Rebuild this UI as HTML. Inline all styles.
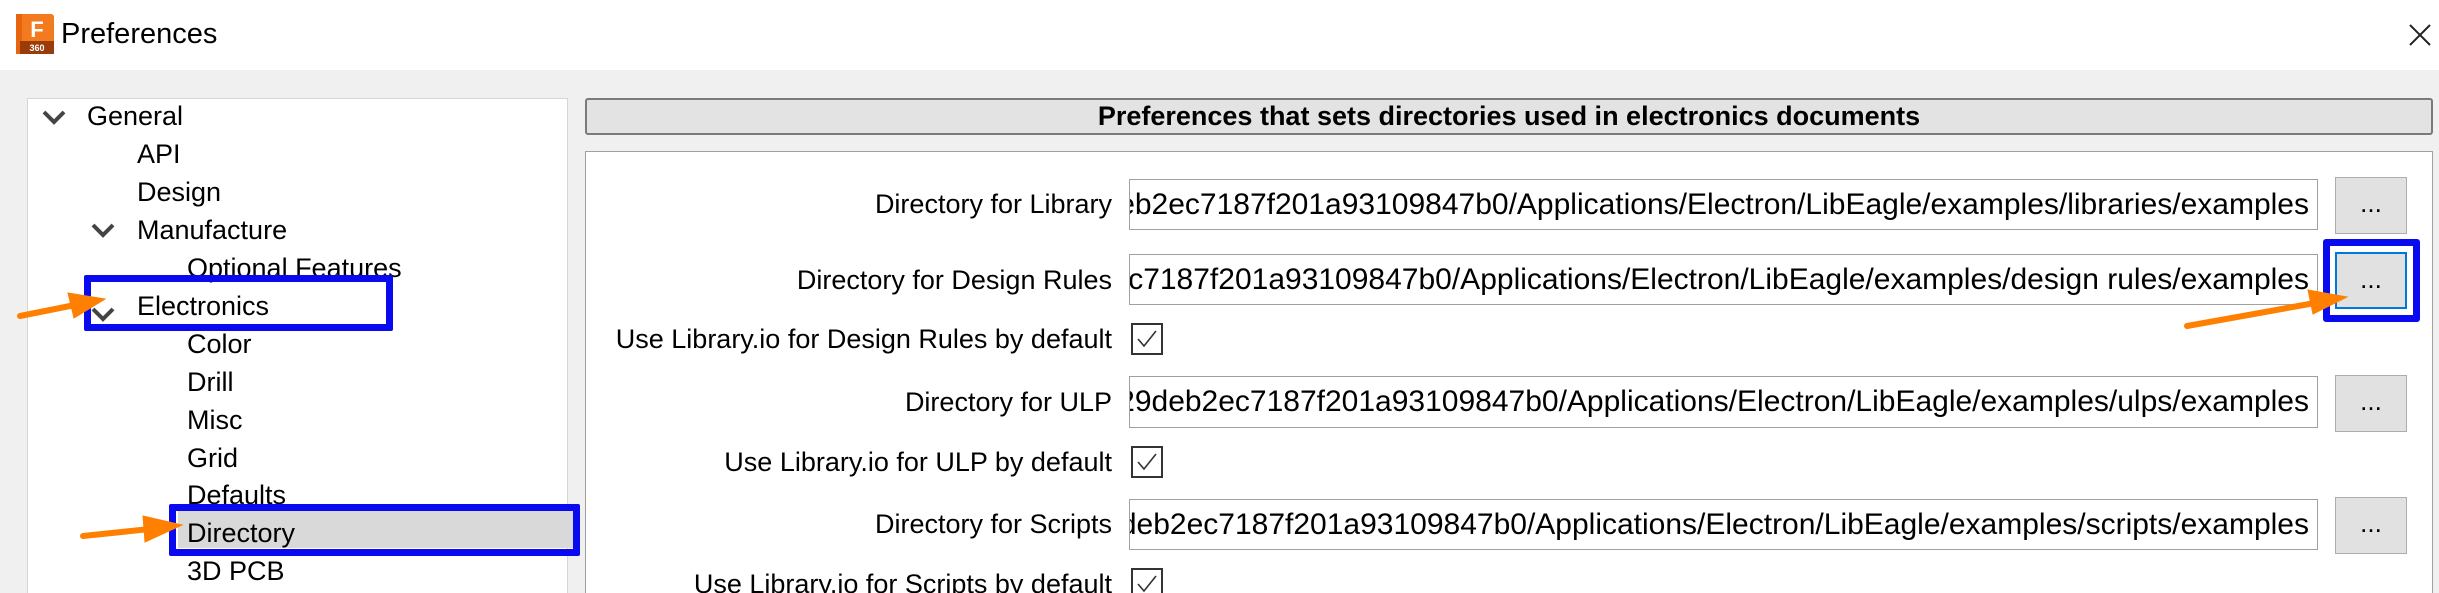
<!DOCTYPE html>
<html style="width:2439px;height:593px;overflow:hidden"><head><meta charset="utf-8"><style>
*{margin:0;padding:0;box-sizing:border-box}
body{width:2439px;height:593px;overflow:hidden;background:#f0f0f0;font-family:"Liberation Sans",sans-serif;position:relative;color:#000}
.a{position:absolute}
.t{position:absolute;font-size:27px;line-height:38px;white-space:nowrap}
.lbl{position:absolute;right:1327px;font-size:27px;line-height:40px;white-space:nowrap;text-align:right}
.inp{position:absolute;left:1129px;width:1189px;background:#fff;border:1px solid #a0a0a0;overflow:hidden;display:flex;justify-content:flex-end;align-items:center;padding-right:8px;font-size:30px;white-space:nowrap}
.btn{position:absolute;left:2335px;width:72px;background:#e1e1e1;border:1px solid #adadad;font-size:26px;text-align:center}
.cb{position:absolute;left:1131px;width:32px;height:32px;border:2px solid #333;background:#fff}
</style></head><body>
<div class="a" style="left:0;top:0;width:2439px;height:70px;background:#fff"></div>
<svg class="a" style="left:16px;top:14px" width="38" height="40" viewBox="0 0 38 40">
<rect x="0" y="0" width="38" height="40" rx="3" fill="#f37a1f"/>
<rect x="0" y="0" width="6" height="40" fill="#e8650f"/>
<rect x="4" y="27" width="34" height="13" fill="#9a3c0a"/>
<text x="21" y="23" font-family="Liberation Sans" font-weight="bold" font-size="22" fill="#fff" text-anchor="middle">F</text>
<text x="21" y="37" font-family="Liberation Sans" font-weight="bold" font-size="9" fill="#fff" text-anchor="middle">360</text>
</svg>
<div class="a" style="left:61px;top:16px;font-size:29px;line-height:36px">Preferences</div>
<svg class="a" style="left:2409px;top:24px" width="22" height="22"><path d="M1 1L21 21M21 1L1 21" stroke="#222" stroke-width="2"/></svg>

<!-- tree -->
<div class="a" style="left:27px;top:98px;width:541px;height:495px;background:#fff;border:1px solid #d6d6d6;border-bottom:none"></div>
<div class="a" style="left:178px;top:511px;width:395px;height:37px;background:#d9d9d9"></div>
<svg class="a" style="left:0;top:0" width="600" height="593">
<g fill="none" stroke="#444" stroke-width="4">
<polyline points="44,112 54,122 64,112"/>
<polyline points="93,225 103,235 113,225"/>
<polyline points="93,309 103,319 113,309"/>
</g></svg>
<div class="t" style="left:87px;top:97px">General</div>
<div class="t" style="left:137px;top:135px">API</div>
<div class="t" style="left:137px;top:173px">Design</div>
<div class="t" style="left:137px;top:211px">Manufacture</div>
<div class="t" style="left:187px;top:249px">Optional Features</div>
<div class="t" style="left:137px;top:287px">Electronics</div>
<div class="t" style="left:187px;top:325px">Color</div>
<div class="t" style="left:187px;top:363px">Drill</div>
<div class="t" style="left:187px;top:401px">Misc</div>
<div class="t" style="left:187px;top:439px">Grid</div>
<div class="t" style="left:187px;top:476px">Defaults</div>
<div class="t" style="left:187px;top:514px">Directory</div>
<div class="t" style="left:187px;top:552px">3D PCB</div>
<div class="a" style="left:84px;top:275px;width:309px;height:56px;border:7px solid #0a0af0;border-radius:2px"></div>
<div class="a" style="left:169px;top:504px;width:411px;height:52px;border:7px solid #0a0af0;border-radius:2px"></div>

<!-- header -->
<div class="a" style="left:585px;top:98px;width:1848px;height:37px;background:#e3e3e3;border:2px solid #7a7a7a;border-radius:3px;font-weight:bold;font-size:27px;line-height:33px;text-align:center">Preferences that sets directories used in electronics documents</div>
<div class="a" style="left:585px;top:151px;width:1848px;height:442px;background:#fff;border:1px solid #a0a0a0;border-bottom:none"></div>

<div class="lbl" style="top:184px">Directory for Library</div>
<div class="inp" style="top:179px;height:51px">C:/Users/user/AppData/Local/Autodesk/webdeploy/production/8f4a29deb2ec7187f201a93109847b0/Applications/Electron/LibEagle/examples/libraries/examples</div>
<div class="btn" style="top:177px;height:57px;line-height:50px">...</div>

<div class="lbl" style="top:260px">Directory for Design Rules</div>
<div class="inp" style="top:254px;height:51px">C:/Users/user/AppData/Local/Autodesk/webdeploy/production/8f4a29deb2ec7187f201a93109847b0/Applications/Electron/LibEagle/examples/design rules/examples</div>
<div class="a" style="left:2323px;top:239px;width:97px;height:83px;border:7px solid #0a0af0;border-radius:3px;background:#fff"></div>
<div class="btn" style="top:252px;height:57px;line-height:50px;border:2px solid #0078d7">...</div>

<div class="lbl" style="top:319px">Use Library.io for Design Rules by default</div>
<div class="cb" style="top:323px"><svg width="28" height="28"><path d="M5 14L11 21L23 6" fill="none" stroke="#333" stroke-width="1.6"/></svg></div>

<div class="lbl" style="top:382px">Directory for ULP</div>
<div class="inp" style="top:376px;height:52px">C:/Users/user/AppData/Local/Autodesk/webdeploy/production/8f4a29deb2ec7187f201a93109847b0/Applications/Electron/LibEagle/examples/ulps/examples</div>
<div class="btn" style="top:375px;height:57px;line-height:50px">...</div>

<div class="lbl" style="top:442px">Use Library.io for ULP by default</div>
<div class="cb" style="top:446px"><svg width="28" height="28"><path d="M5 14L11 21L23 6" fill="none" stroke="#333" stroke-width="1.6"/></svg></div>

<div class="lbl" style="top:504px">Directory for Scripts</div>
<div class="inp" style="top:499px;height:51px">C:/Users/user/AppData/Local/Autodesk/webdeploy/production/8f4a29deb2ec7187f201a93109847b0/Applications/Electron/LibEagle/examples/scripts/examples</div>
<div class="btn" style="top:497px;height:57px;line-height:50px">...</div>

<div class="lbl" style="top:564px">Use Library.io for Scripts by default</div>
<div class="cb" style="top:568px;height:25px;border-bottom:none"><svg width="28" height="28"><path d="M5 14L11 21L23 6" fill="none" stroke="#333" stroke-width="1.6"/></svg></div>

<!-- arrows -->
<svg class="a" style="left:0;top:0" width="2439" height="593">
<g stroke="#ff8000" stroke-width="6" stroke-linecap="round" fill="#ff8000">
<line x1="20" y1="316" x2="80" y2="304"/>
<polygon points="105,299 68,293 74,318" stroke-width="1"/>
<line x1="83" y1="536" x2="150" y2="529"/>
<polygon points="182,525 143,516 145,542" stroke-width="1"/>
<line x1="2187" y1="326" x2="2315" y2="303"/>
<polygon points="2347,297 2308,290 2313,314" stroke-width="1"/>
</g></svg>
</body></html>
